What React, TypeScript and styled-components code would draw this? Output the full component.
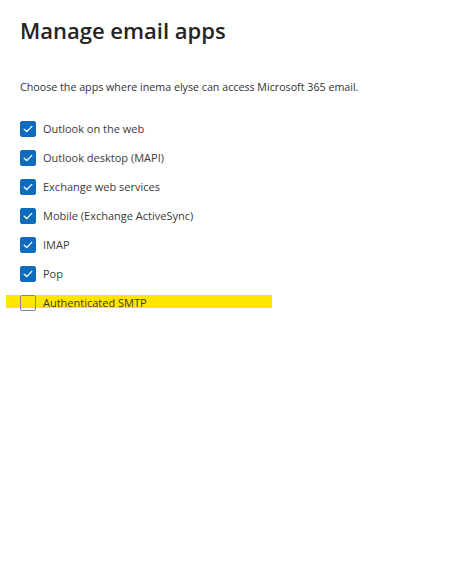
import React from 'react';
import styled, { createGlobalStyle } from 'styled-components';

type App = {
  label: string;
  enabled: boolean;
  highlighted?: boolean;
};

const apps: App[] = [
  { label: 'Outlook on the web', enabled: true },
  { label: 'Outlook desktop (MAPI)', enabled: true },
  { label: 'Exchange web services', enabled: true },
  { label: 'Mobile (Exchange ActiveSync)', enabled: true },
  { label: 'IMAP', enabled: true },
  { label: 'Pop', enabled: true },
  { label: 'Authenticated SMTP', enabled: false, highlighted: true },
];

const GlobalStyle = createGlobalStyle`
  html, body {
    margin: 0;
    padding: 0;
    background: #ffffff;
  }
  body {
    font-family: "Open Sans", "Noto Sans", sans-serif;
    color: #323130;
  }
`;

const CheckMark = () => (
  <svg width="10" height="8" viewBox="0 0 10 8" fill="none">
    <path d="M1.2 4.2 L3.8 6.6 L8.8 1.4" stroke="#fff" strokeWidth="1.3" strokeLinecap="round" strokeLinejoin="round" />
  </svg>
);

const ManageEmailApps = () => {
  return (
    <Panel>
      <Title>Manage email apps</Title>
      <Description>
        Choose the apps where inema elyse can access Microsoft 365 email.
      </Description>
      <List>
        {apps.map(app => (
          <Row key={app.label} highlighted={app.highlighted}>
            <Box checked={app.enabled}>{app.enabled && <CheckMark />}</Box>
            <Label>{app.label}</Label>
          </Row>
        ))}
      </List>
    </Panel>
  );
};

const Panel = styled.div`
  width: 474px;
  height: 577px;
  box-sizing: border-box;
  padding: 14px 0 0 20px;
  background: #fff;
`;

const Title = styled.h1`
  margin: 0;
  font-size: 22px;
  line-height: 32px;
  font-weight: 600;
  color: #252423;
`;

const Description = styled.p`
  margin: 33px 0 0 0;
  font-size: 10.7px;
  line-height: 16px;
  color: #323130;
`;

const List = styled.ul`
  list-style: none;
  margin: 26px 0 0 0;
  padding: 0;
  display: flex;
  flex-direction: column;
  gap: 13px;
`;

const Row = styled.li<{ highlighted?: boolean }>`
  position: relative;
  display: flex;
  align-items: center;
  gap: 7px;
  height: 16px;

  ${({ highlighted }) =>
    highlighted &&
    `
    &::before {
      content: '';
      position: absolute;
      left: -14px;
      top: 0;
      width: 266px;
      height: 13px;
      background: #ffe600;
    }
  `}
`;

const Box = styled.span<{ checked: boolean }>`
  position: relative;
  box-sizing: border-box;
  width: 16px;
  height: 16px;
  border-radius: 2px;
  display: flex;
  align-items: center;
  justify-content: center;
  background: ${({ checked }) => (checked ? '#0f6cbd' : 'transparent')};
  border: 1px solid ${({ checked }) => (checked ? '#0f6cbd' : '#8a8886')};
`;

const Label = styled.span`
  position: relative;
  font-size: 11px;
  line-height: 16px;
  color: #3b3a39;
`;

const AppRoot = () => (
  <>
    <GlobalStyle />
    <ManageEmailApps />
  </>
);

export default AppRoot;
